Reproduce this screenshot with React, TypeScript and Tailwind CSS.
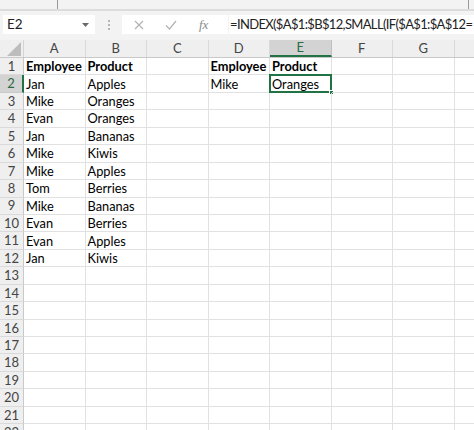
import React from "react";

const COLS = ["A", "B", "C", "D", "E", "F", "G", "H"];
const ROW_COUNT = 22;

// cell data keyed by "row-col"
const DATA: Record<string, { v: string; b?: boolean }> = {
  "1-A": { v: "Employee", b: true },
  "1-B": { v: "Product", b: true },
  "1-D": { v: "Employee", b: true },
  "1-E": { v: "Product", b: true },
  "2-A": { v: "Jan" },
  "2-B": { v: "Apples" },
  "2-D": { v: "Mike" },
  "2-E": { v: "Oranges" },
  "3-A": { v: "Mike" },
  "3-B": { v: "Oranges" },
  "4-A": { v: "Evan" },
  "4-B": { v: "Oranges" },
  "5-A": { v: "Jan" },
  "5-B": { v: "Bananas" },
  "6-A": { v: "Mike" },
  "6-B": { v: "Kiwis" },
  "7-A": { v: "Mike" },
  "7-B": { v: "Apples" },
  "8-A": { v: "Tom" },
  "8-B": { v: "Berries" },
  "9-A": { v: "Mike" },
  "9-B": { v: "Bananas" },
  "10-A": { v: "Evan" },
  "10-B": { v: "Berries" },
  "11-A": { v: "Evan" },
  "11-B": { v: "Apples" },
  "12-A": { v: "Jan" },
  "12-B": { v: "Kiwis" },
};

const font = { fontFamily: "Lato, 'Liberation Sans', sans-serif" };

function FormulaBar() {
  return (
    <div className="shrink-0">
      {/* ribbon edge */}
      <div className="h-[11px] flex bg-[#f3f3f3] border-b-2 border-[#dcdcdc]">
        <div className="w-[58px] border-r border-[#9a9a9a]" />
        <div className="flex-1" />
        <div className="w-[6px] border-l border-[#9a9a9a]" />
      </div>
      <div className="h-[29px] flex items-center bg-[#f3f3f3] pb-[2px]">
        {/* name box */}
        <div className="ml-[3px] w-[92px] h-[19px] bg-white flex items-center justify-between pl-[4px] pr-[6px]">
          <span className="text-[13.5px] text-[#222]">E2</span>
          <svg width="7" height="4" viewBox="0 0 7 4">
            <path d="M0 0h7L3.5 4z" fill="#6b6b6b" />
          </svg>
        </div>
        <div className="w-[27px] flex flex-col items-center gap-[2px]">
          <span className="w-[2px] h-[2px] bg-[#b5b5b5]" />
          <span className="w-[2px] h-[2px] bg-[#b5b5b5]" />
          <span className="w-[2px] h-[2px] bg-[#b5b5b5]" />
        </div>
        <div className="w-[106px] h-[19px] bg-white flex items-center">
          <svg className="ml-[12px]" width="10" height="10" viewBox="0 0 10 10">
            <path d="M1 1l8 8M9 1l-8 8" stroke="#b3b3b3" strokeWidth="1.2" />
          </svg>
          <svg className="ml-[21px]" width="12" height="10" viewBox="0 0 12 10">
            <path d="M1 5.5l3.5 3.5L11 1" stroke="#b3b3b3" strokeWidth="1.2" fill="none" />
          </svg>
          <span
            className="ml-[22px] text-[13px] italic text-[#8a8a8a]"
            style={{ fontFamily: "'Liberation Serif', serif" }}
          >
            fx
          </span>
        </div>
        <div className="ml-[1px] flex-1 h-[19px] bg-white flex items-center overflow-hidden">
          <span className="pl-[1px] text-[13px] text-[#222] whitespace-nowrap tracking-[-0.65px]">
            =INDEX($A$1:$B$12,SMALL(IF($A$1:$A$12=
          </span>
        </div>
      </div>
    </div>
  );
}

function Grid() {
  const rows = Array.from({ length: ROW_COUNT }, (_, i) => i + 1);
  return (
    <div className="flex-1 min-h-0 overflow-hidden bg-white">
      {/* column header */}
      <div className="h-[18px] flex bg-[#efefef] border-b border-[#c9c9c9]">
        <div className="w-[24px] shrink-0 relative border-r border-[#d4d4d4]">
          <svg className="absolute right-[2px] bottom-[1px]" width="14" height="14" viewBox="0 0 14 14">
            <path d="M14 0v14H0z" fill="#bdbdbd" />
          </svg>
        </div>
        {COLS.map((c) => (
          <div
            key={c}
            className={
              c === "E"
                ? "w-[61.5px] shrink-0 flex items-center justify-center pt-[1px] text-[13px] text-[#2b6a45] bg-[#d3d3d3] border-b-2 border-[#217346] border-r border-r-[#c0c0c0]"
                : "w-[61.5px] shrink-0 flex items-center justify-center pt-[1px] text-[13px] text-[#444] border-r border-[#d9d9d9]"
            }
          >
            {c === "H" ? "" : c}
          </div>
        ))}
      </div>
      {rows.map((r) => (
        <div key={r} className="h-[17.45px] flex">
          <div
            className={
              r === 2
                ? "w-[24px] shrink-0 flex items-center justify-center pt-[1px] text-[13px] text-[#2b6a45] bg-[#d3d3d3] border-r-2 border-[#217346] border-b border-b-[#c9c9c9]"
                : "w-[24px] shrink-0 flex items-center justify-center pt-[1px] text-[13px] text-[#444] bg-[#efefef] border-r border-[#c9c9c9] border-b border-b-[#dadada]"
            }
          >
            {r}
          </div>
          {COLS.map((c) => {
            const cell = DATA[`${r}-${c}`];
            const selected = r === 2 && c === "E";
            return (
              <div
                key={c}
                className="w-[61.5px] shrink-0 relative border-r border-b border-[#e1e1e1] flex items-center pl-[2px] pt-[1px]"
              >
                {cell && (
                  <span
                    className={
                      cell.b
                        ? "text-[12.8px] font-bold text-black whitespace-nowrap"
                        : "text-[12.8px] text-black whitespace-nowrap"
                    }
                  >
                    {cell.v}
                  </span>
                )}
                {selected && (
                  <>
                    <div className="absolute -left-[1px] -top-[1px] right-[-1px] bottom-[-1px] border-2 border-[#217346] pointer-events-none" />
                    <div className="absolute right-[-3px] bottom-[-3px] w-[5px] h-[5px] bg-[#217346] border border-white" />
                  </>
                )}
              </div>
            );
          })}
        </div>
      ))}
    </div>
  );
}

export default function App() {
  return (
    <div className="w-[474px] h-[430px] flex flex-col overflow-hidden bg-white" style={font}>
      <FormulaBar />
      <Grid />
    </div>
  );
}
